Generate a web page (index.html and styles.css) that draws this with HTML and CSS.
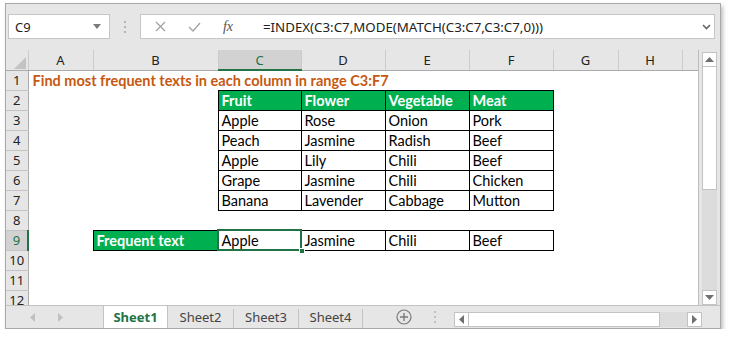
FILE: index.html
```html
<!DOCTYPE html>
<html>
<head>
    <title>Most frequent text</title>
    <link rel="stylesheet" href="styles.css">
</head>
<body>
    <div class="window">
        <div class="formula-bar">
            <div class="name-box">
                <span>C9</span>
                <svg width="8" height="5" viewBox="0 0 8 5"><polygon points="0,0 8,0 4,5" fill="#7a7a7a"/></svg>
            </div>
            <div class="bar-sep">
                <svg width="3" height="12" viewBox="0 0 3 12"><rect x="0" y="0" width="2" height="2" fill="#b5b5b5"/><rect x="0" y="5" width="2" height="2" fill="#b5b5b5"/><rect x="0" y="10" width="2" height="2" fill="#b5b5b5"/></svg>
            </div>
            <div class="formula-box">
                <span class="fbtn">
                    <svg width="11" height="11" viewBox="0 0 11 11"><path d="M1 1 L10 10 M10 1 L1 10" stroke="#a0a0a0" stroke-width="1.2" fill="none"/></svg>
                </span>
                <span class="fbtn">
                    <svg width="13" height="10" viewBox="0 0 13 10"><path d="M1 5 L5 9 L12 1" stroke="#a0a0a0" stroke-width="1.2" fill="none"/></svg>
                </span>
                <span class="fbtn fx">fx</span>
                <span class="formula">=INDEX(C3:C7,MODE(MATCH(C3:C7,C3:C7,0)))</span>
                <svg class="chev" width="9" height="6" viewBox="0 0 9 6"><path d="M1 1 L4.5 4.5 L8 1" stroke="#666" stroke-width="1.6" fill="none"/></svg>
            </div>
        </div>

        <div class="sheet-area">
            <div class="grid-wrap">
                <table class="grid">
                    <colgroup>
                        <col class="w-rh"><col class="w-a"><col class="w-b"><col class="w-c"><col class="w-d">
                        <col class="w-e"><col class="w-f"><col class="w-g"><col class="w-h"><col class="w-i">
                    </colgroup>
                    <tr class="col-heads">
                        <th class="corner"><svg width="12" height="12" viewBox="0 0 12 12"><polygon points="12,0 12,12 0,12" fill="#c3c3c3"/></svg></th>
                        <th>A</th><th>B</th><th class="sel-col">C</th><th>D</th><th>E</th><th>F</th><th>G</th><th>H</th><th class="last"></th>
                    </tr>
                    <tr>
                        <th class="rh">1</th>
                        <td colspan="9" class="title">Find most frequent texts in each column in range C3:F7</td>
                    </tr>
                    <tr>
                        <th class="rh">2</th><td></td><td></td>
                        <td class="t hd">Fruit</td><td class="t hd">Flower</td><td class="t hd">Vegetable</td><td class="t hd">Meat</td>
                        <td></td><td></td><td></td>
                    </tr>
                    <tr>
                        <th class="rh">3</th><td></td><td></td>
                        <td class="t">Apple</td><td class="t">Rose</td><td class="t">Onion</td><td class="t">Pork</td>
                        <td></td><td></td><td></td>
                    </tr>
                    <tr>
                        <th class="rh">4</th><td></td><td></td>
                        <td class="t">Peach</td><td class="t">Jasmine</td><td class="t">Radish</td><td class="t">Beef</td>
                        <td></td><td></td><td></td>
                    </tr>
                    <tr>
                        <th class="rh">5</th><td></td><td></td>
                        <td class="t">Apple</td><td class="t">Lily</td><td class="t">Chili</td><td class="t">Beef</td>
                        <td></td><td></td><td></td>
                    </tr>
                    <tr>
                        <th class="rh">6</th><td></td><td></td>
                        <td class="t">Grape</td><td class="t">Jasmine</td><td class="t">Chili</td><td class="t">Chicken</td>
                        <td></td><td></td><td></td>
                    </tr>
                    <tr>
                        <th class="rh">7</th><td></td><td></td>
                        <td class="t">Banana</td><td class="t">Lavender</td><td class="t">Cabbage</td><td class="t">Mutton</td>
                        <td></td><td></td><td></td>
                    </tr>
                    <tr>
                        <th class="rh">8</th><td></td><td></td><td></td><td></td><td></td><td></td><td></td><td></td><td></td>
                    </tr>
                    <tr>
                        <th class="rh sel-row">9</th><td></td>
                        <td class="t hd">Frequent text</td>
                        <td class="t active">Apple<div class="sel"><div class="handle"></div></div></td>
                        <td class="t">Jasmine</td><td class="t">Chili</td><td class="t">Beef</td>
                        <td></td><td></td><td></td>
                    </tr>
                    <tr>
                        <th class="rh">10</th><td></td><td></td><td></td><td></td><td></td><td></td><td></td><td></td><td></td>
                    </tr>
                    <tr>
                        <th class="rh">11</th><td></td><td></td><td></td><td></td><td></td><td></td><td></td><td></td><td></td>
                    </tr>
                    <tr>
                        <th class="rh">12</th><td></td><td></td><td></td><td></td><td></td><td></td><td></td><td></td><td></td>
                    </tr>
                </table>
            </div>
            <div class="vscroll">
                <div class="sb-btn"><svg width="9" height="5" viewBox="0 0 9 5"><polygon points="0,5 9,5 4.5,0" fill="#707070"/></svg></div>
                <div class="sb-thumb"></div>
                <div class="sb-track"></div>
                <div class="sb-btn"><svg width="9" height="5" viewBox="0 0 9 5"><polygon points="0,0 9,0 4.5,5" fill="#707070"/></svg></div>
            </div>
        </div>

        <div class="tab-bar">
            <div class="tab-nav">
                <svg width="5" height="9" viewBox="0 0 5 9"><polygon points="5,0 5,9 0,4.5" fill="#c0c0c0"/></svg>
                <svg width="5" height="9" viewBox="0 0 5 9"><polygon points="0,0 0,9 5,4.5" fill="#c0c0c0"/></svg>
            </div>
            <div class="tab active-tab">Sheet1</div>
            <div class="tab">Sheet2</div>
            <div class="tab">Sheet3</div>
            <div class="tab">Sheet4</div>
            <div class="add-sheet">
                <svg width="16" height="16" viewBox="0 0 16 16"><circle cx="8" cy="8" r="7" stroke="#7a7a7a" stroke-width="1.2" fill="none"/><path d="M8 4 V12 M4 8 H12" stroke="#7a7a7a" stroke-width="1.4"/></svg>
            </div>
            <div class="tab-sep">
                <svg width="2" height="12" viewBox="0 0 2 12"><rect x="0" y="0" width="2" height="2" fill="#c0c0c0"/><rect x="0" y="5" width="2" height="2" fill="#c0c0c0"/><rect x="0" y="10" width="2" height="2" fill="#c0c0c0"/></svg>
            </div>
            <div class="hscroll">
                <div class="sb-btn"><svg width="5" height="9" viewBox="0 0 5 9"><polygon points="5,0 5,9 0,4.5" fill="#707070"/></svg></div>
                <div class="hs-thumb"></div>
                <div class="sb-track"></div>
                <div class="sb-btn"><svg width="5" height="9" viewBox="0 0 5 9"><polygon points="0,0 0,9 5,4.5" fill="#707070"/></svg></div>
            </div>
        </div>
    </div>
</body>
</html>
```

FILE: styles.css
```css
* {
    margin: 0;
    padding: 0;
    box-sizing: border-box;
}

body {
    background-color: #ffffff;
    font-family: 'Noto Sans', 'Open Sans', sans-serif;
    color: #222222;
}

.window {
    margin: 3px 0 0 5px;
    width: 716px;
    height: 326px;
    border: 1px solid #a9a9a9;
    background-color: #e6e6e6;
    box-shadow: 2px 3px 4px rgba(0, 0, 0, 0.25);
    display: flex;
    flex-direction: column;
}

/* formula bar */
.formula-bar {
    height: 46px;
    display: flex;
    align-items: flex-start;
    padding: 10px 0 0 2px;
}

.name-box {
    width: 102px;
    height: 25px;
    background-color: #ffffff;
    border: 1px solid #c6c6c6;
    display: flex;
    align-items: center;
    justify-content: space-between;
    padding: 0 8px 0 6px;
    font-size: 13px;
}

.bar-sep {
    width: 30px;
    height: 25px;
    display: flex;
    align-items: center;
    justify-content: center;
}

.formula-box {
    width: 575px;
    height: 25px;
    background-color: #ffffff;
    border: 1px solid #c6c6c6;
    display: flex;
    align-items: center;
    padding-left: 2px;
}

.fbtn {
    width: 34px;
    display: flex;
    justify-content: center;
    align-items: center;
}

.fx {
    font-family: 'Liberation Serif', serif;
    font-style: italic;
    font-size: 14px;
    color: #555555;
}

.formula {
    margin-left: 18px;
    font-size: 13.3px;
    color: #222222;
    white-space: nowrap;
}

.chev {
    margin-left: auto;
    margin-right: 3px;
}

/* grid */
.sheet-area {
    height: 255px;
    display: flex;
}

.grid-wrap {
    width: 693px;
    height: 255px;
    overflow: hidden;
    background-color: #ffffff;
    border-right: 1px solid #bdbdbd;
}

.grid {
    width: 692px;
    table-layout: fixed;
    border-collapse: collapse;
}

.w-rh { width: 22px; }
.w-a { width: 65px; }
.w-b { width: 125px; }
.w-c { width: 83px; }
.w-d { width: 84px; }
.w-e { width: 84px; }
.w-f { width: 84px; }
.w-g { width: 65px; }
.w-h { width: 64px; }
.w-i { width: 16px; }

.grid tr {
    height: 20px;
}

.col-heads th {
    background-color: #e6e6e6;
    font-weight: normal;
    font-size: 13px;
    color: #222222;
    border-right: 1px solid #cbcbcb;
    border-bottom: 1px solid #ababab;
    height: 20px;
    padding: 0;
}

.col-heads .corner {
    text-align: right;
    vertical-align: bottom;
    padding: 0 2px 1px 0;
    line-height: 0;
}

.col-heads .last {
    border-right: none;
}

.col-heads .sel-col {
    background-color: #d2d2d2;
    color: #217346;
    border-bottom: 2px solid #217346;
}

.rh {
    background-color: #e6e6e6;
    font-weight: normal;
    font-size: 13px;
    color: #222222;
    border-right: 1px solid #ababab;
    border-bottom: 1px solid #c3c3c3;
    padding: 0;
    text-align: center;
}

.rh.sel-row {
    background-color: #d2d2d2;
    color: #217346;
    border-right: 2px solid #217346;
}

.grid td {
    height: 20px;
    padding: 0 3px;
    font-family: 'Lato', 'Noto Sans', sans-serif;
    font-size: 14.5px;
    line-height: 18px;
    vertical-align: bottom;
    white-space: nowrap;
    color: #000000;
}

.grid td.title {
    color: #c65911;
    font-weight: bold;
    padding-left: 4px;
}

.grid td.t {
    border: 1px solid #000000;
}

.grid td.hd {
    background-color: #00b050;
    color: #ffffff;
    font-weight: bold;
}

.grid td.active {
    position: relative;
}

.sel {
    position: absolute;
    top: -2px;
    left: -2px;
    right: -1px;
    bottom: -1px;
    border: 2px solid #217346;
}

.handle {
    position: absolute;
    right: -5px;
    bottom: -5px;
    width: 6px;
    height: 6px;
    background-color: #217346;
    border: 1px solid #ffffff;
}

/* scrollbars */
.vscroll {
    width: 15px;
    margin-left: 3px;
    padding-top: 2px;
    display: flex;
    flex-direction: column;
}

.sb-btn {
    width: 15px;
    height: 15px;
    background-color: #ffffff;
    border: 1px solid #c3c3c3;
    display: flex;
    align-items: center;
    justify-content: center;
    flex-shrink: 0;
}

.sb-thumb {
    height: 123px;
    background-color: #ffffff;
    border: 1px solid #c3c3c3;
    border-top: none;
}

.sb-track {
    flex: 1;
    background-color: #dcdcdc;
}

/* sheet tabs */
.tab-bar {
    height: 23px;
    border-top: 1px solid #c3c3c3;
    display: flex;
    align-items: flex-start;
}

.tab-nav {
    width: 97px;
    height: 22px;
    display: flex;
    align-items: center;
    gap: 23px;
    padding-left: 24px;
}

.tab {
    width: 65px;
    height: 19px;
    margin-top: 3px;
    border-left: 1px solid #c3c3c3;
    font-size: 13px;
    color: #444444;
    text-align: center;
    line-height: 17px;
}

.tab.active-tab {
    height: 22px;
    margin-top: 0;
    background-color: #ffffff;
    border-right: 1px solid #c3c3c3;
    color: #217346;
    font-weight: bold;
    line-height: 23px;
}

.tab.active-tab + .tab {
    border-left: none;
}

.tab:nth-child(5) {
    border-right: 1px solid #c3c3c3;
}

.add-sheet {
    margin: 3px 0 0 33px;
    line-height: 0;
}

.tab-sep {
    margin: 5px 0 0 22px;
    line-height: 0;
}

.hscroll {
    width: 248px;
    height: 15px;
    margin: 6px 0 0 18px;
    display: flex;
}

.hs-thumb {
    width: 191px;
    background-color: #ffffff;
    border: 1px solid #c3c3c3;
    border-left: none;
}
```
